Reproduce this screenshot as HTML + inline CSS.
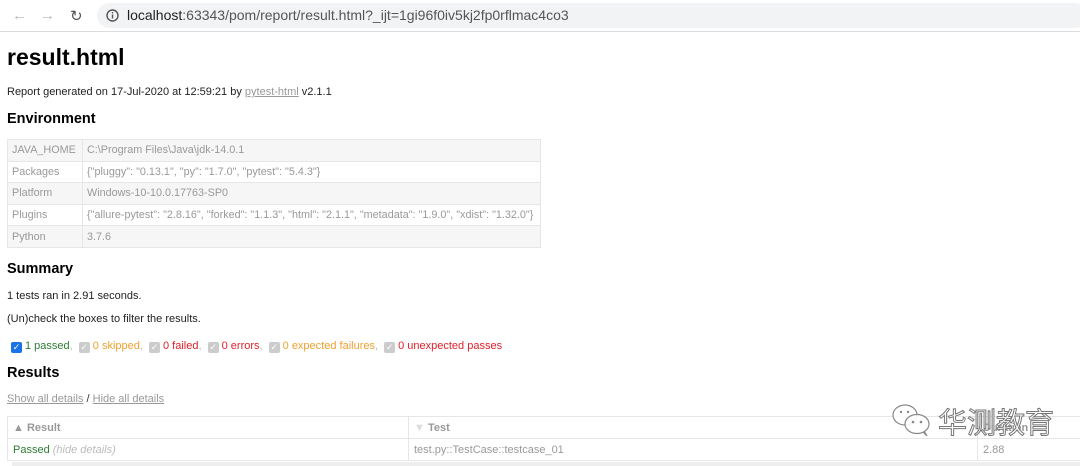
<!DOCTYPE html>
<html><head><meta charset="utf-8"><style>
body{margin:0;width:1080px;height:466px;overflow:hidden;background:#fff;font-family:"Liberation Sans",Arial,sans-serif;font-size:11px;color:#222;position:relative}
.bar{position:absolute;left:0;top:0;width:1080px;height:31px;background:#fff;border-bottom:1px solid #dcdcdc}
.url{position:absolute;left:97px;top:3px;width:990px;height:25px;border-radius:13px;background:#f1f3f4}
.url span{position:absolute;left:30px;top:4px;font-size:14px;color:#555}
.url b{font-weight:normal;color:#202124}
.ab{position:absolute;top:7px;font-size:15px;color:#bbb}
.a{position:absolute;left:7px}
h1{position:absolute;left:7px;top:44px;margin:0;font-size:23px;font-weight:bold;color:#000}
h2{position:absolute;left:7px;margin:0;font-size:14.5px;font-weight:bold;color:#000}
table{border-collapse:collapse;position:absolute;left:7px}
.env td{border:1px solid #e6e6e6;height:20.6px;padding:0 4px;color:#999;font-size:10.8px;white-space:nowrap}
.env tr:nth-child(odd) td{background:#f6f6f6}
.cb{display:inline-block;width:11px;height:11px;background:#ccc;border-radius:2px;vertical-align:-1px;margin:0 3px 0 3px;color:#fff;font-size:9px;line-height:11px;text-align:center}
.res td{border:1px solid #e6e6e6;height:21px;padding:0 5px;font-size:11px}
</style></head><body>
<div class="bar">
<span class="ab" style="left:12px">←</span><span class="ab" style="left:40px">→</span><span class="ab" style="left:70px;color:#555">↻</span>
<div class="url"><svg style="position:absolute;left:9px;top:6px" width="13" height="13"><circle cx="6.5" cy="6.5" r="5.5" fill="none" stroke="#555" stroke-width="1.4"/><rect x="5.8" y="5.5" width="1.4" height="4" fill="#555"/><rect x="5.8" y="3" width="1.4" height="1.4" fill="#555"/></svg><span><b>localhost</b>:63343/pom/report/result.html?_ijt=1gi96f0iv5kj2fp0rflmac4co3</span></div>
</div>
<h1>result.html</h1>
<div class="a" style="top:86px">Report generated on 17-Jul-2020 at 12:59:21 by <u style="color:#999">pytest-html</u> v2.1.1</div>
<h2 style="top:111px">Environment</h2>
<table class="env" style="top:139px;width:534px">
<tr><td style="width:66px">JAVA_HOME</td><td>C:\Program Files\Java\jdk-14.0.1</td></tr>
<tr><td>Packages</td><td>{"pluggy": "0.13.1", "py": "1.7.0", "pytest": "5.4.3"}</td></tr>
<tr><td>Platform</td><td>Windows-10-10.0.17763-SP0</td></tr>
<tr><td>Plugins</td><td>{"allure-pytest": "2.8.16", "forked": "1.1.3", "html": "2.1.1", "metadata": "1.9.0", "xdist": "1.32.0"}</td></tr>
<tr><td>Python</td><td>3.7.6</td></tr>
</table>
<h2 style="top:261px">Summary</h2>
<div class="a" style="top:290px">1 tests ran in 2.91 seconds.</div>
<div class="a" style="top:313px">(Un)check the boxes to filter the results.</div>
<div class="a" style="top:340px;left:8px;white-space:nowrap"><span class="cb" style="background:#1a73e8">✓</span><span style="color:#2e7d32">1 passed</span><span style="color:#bbb">,</span> <span class="cb">✓</span><span style="color:#f0a030">0 skipped</span><span style="color:#bbb">,</span> <span class="cb">✓</span><span style="color:#e0202a">0 failed</span><span style="color:#bbb">,</span> <span class="cb">✓</span><span style="color:#e0202a">0 errors</span><span style="color:#bbb">,</span> <span class="cb">✓</span><span style="color:#f0a030">0 expected failures</span><span style="color:#bbb">,</span> <span class="cb">✓</span><span style="color:#e0202a">0 unexpected passes</span></div>
<h2 style="top:365px">Results</h2>
<div class="a" style="top:393px;color:#999"><u>Show all details</u> <span style="color:#333">/</span> <u>Hide all details</u></div>
<table class="res" style="top:416px;width:1090px">
<tr style="color:#999;font-weight:bold"><td style="width:390px"><span style="font-size:11px;color:#999">▲</span> Result</td><td style="width:558px"><span style="font-size:11px;color:#ddd">▼</span> Test</td><td>Duration</td></tr>
<tr><td><span style="color:#2e7d32">Passed</span> <i style="color:#bbb">(hide details)</i></td><td style="color:#999">test.py::TestCase::testcase_01</td><td style="color:#999">2.88</td></tr>
</table>
<div style="position:absolute;left:12px;top:462px;width:1080px;height:4px;background:#eee"></div>
<svg style="position:absolute;left:890px;top:402px" width="44" height="36"><ellipse cx="15" cy="13" rx="12" ry="10" fill="rgba(255,255,255,.8)" stroke="#888" stroke-width="1.2"/><ellipse cx="27" cy="22" rx="12" ry="9.5" fill="rgba(255,255,255,.9)" stroke="#888" stroke-width="1.2"/><path d="M33 30 L37 34 L34 29" fill="none" stroke="#888" stroke-width="1.2"/><circle cx="23" cy="20" r="1.3" fill="#888"/><circle cx="31" cy="20" r="1.3" fill="#888"/><circle cx="11" cy="10" r="1.2" fill="#888"/><circle cx="18" cy="10" r="1.2" fill="#888"/></svg>
<div style="position:absolute;left:938px;top:400px;font-family:'Liberation Sans','Noto Sans CJK SC',sans-serif;font-size:29px;color:rgba(255,255,255,.85);-webkit-text-stroke:1px #777">华测教育</div>
</body></html>
